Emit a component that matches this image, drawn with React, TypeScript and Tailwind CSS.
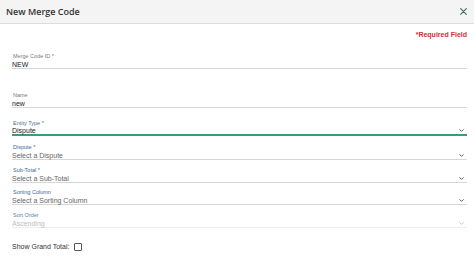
import { ChevronDown } from "lucide-react";

type FieldProps = {
  label: string;
  value: string;
  labelClass?: string;
  valueClass?: string;
  lineClass?: string;
  select?: boolean;
  chevronClass?: string;
  className?: string;
};

function Field({
  label,
  value,
  labelClass = "text-[#7a7a7a]",
  valueClass = "text-[#222]",
  lineClass = "border-b border-[#d6d6d6]",
  select = false,
  chevronClass = "text-[#444]",
  className = "",
}: FieldProps) {
  return (
    <div className={className}>
      <div className={`h-[7px] text-[5.5px] leading-[7px] pl-[1px] ${labelClass}`}>{label}</div>
      <div className={`flex h-[9px] items-center justify-between ${lineClass}`}>
        <span className={`text-[7px] leading-[9px] ${valueClass}`}>{value}</span>
        {select && <ChevronDown className={`mr-[2px] h-[7px] w-[7px] ${chevronClass}`} strokeWidth={3} />}
      </div>
    </div>
  );
}

export default function App() {
  return (
    <div className="h-[274px] w-[474px] bg-white" style={{ fontFamily: "'Liberation Sans', Arial, sans-serif" }}>
      <div className="flex h-[24px] items-center justify-between border-b border-[#dcdcdc] bg-[#f4f4f4] pl-[6px] pr-[6px]">
        <span
          className="text-[9px] font-semibold text-[#333]"
          style={{ fontFamily: "'Open Sans', sans-serif" }}
        >
          New Merge Code
        </span>
        <svg width="7" height="7" viewBox="0 0 10 10" className="mr-[1px]">
          <path d="M1 1 L9 9 M9 1 L1 9" stroke="#3f6b5c" strokeWidth="1.6" strokeLinecap="round" />
        </svg>
      </div>

      <div className="pl-[12px] pr-[7px]">
        <div className="flex justify-end pt-[7px]">
          <span className="text-[7px] font-bold leading-[8px] text-[#cc3333]">*Required Field</span>
        </div>

        <Field className="mt-[14px]" label="Merge Code ID *" value="NEW" />
        <Field className="mt-[23px]" label="Name" value="new" />
        <Field
          className="mt-[12px]"
          label="Entity Type *"
          value="Dispute"
          labelClass="text-[#4a6f93]"
          lineClass="border-b-[2px] border-[#3f9a78]"
          select
        />
        <Field
          className="mt-[8px]"
          label="Dispute *"
          value="Select a Dispute"
          labelClass="text-[#3a68a0]"
          valueClass="text-[#666]"
          select
        />
        <Field
          className="mt-[7px]"
          label="Sub-Total *"
          value="Select a Sub-Total"
          labelClass="text-[#3a68a0]"
          valueClass="text-[#666]"
          select
        />
        <Field
          className="mt-[6px]"
          label="Sorting Column"
          value="Select a Sorting Column"
          labelClass="text-[#3a68a0]"
          valueClass="text-[#666]"
          select
        />
        <Field
          className="mt-[7px]"
          label="Sort Order"
          value="Ascending"
          labelClass="text-[#5a7fa8]"
          valueClass="text-[#bdbdbd]"
          lineClass="border-b border-[#eeeeee]"
          chevronClass="text-[#c4c4c4]"
          select
        />

        <div className="mt-[14px] flex items-center gap-[5px]">
          <span className="text-[7px] leading-[10px] text-[#333]">Show Grand Total:</span>
          <span className="h-[8px] w-[8px] rounded-[1px] border border-[#555]" />
        </div>
      </div>
    </div>
  );
}
